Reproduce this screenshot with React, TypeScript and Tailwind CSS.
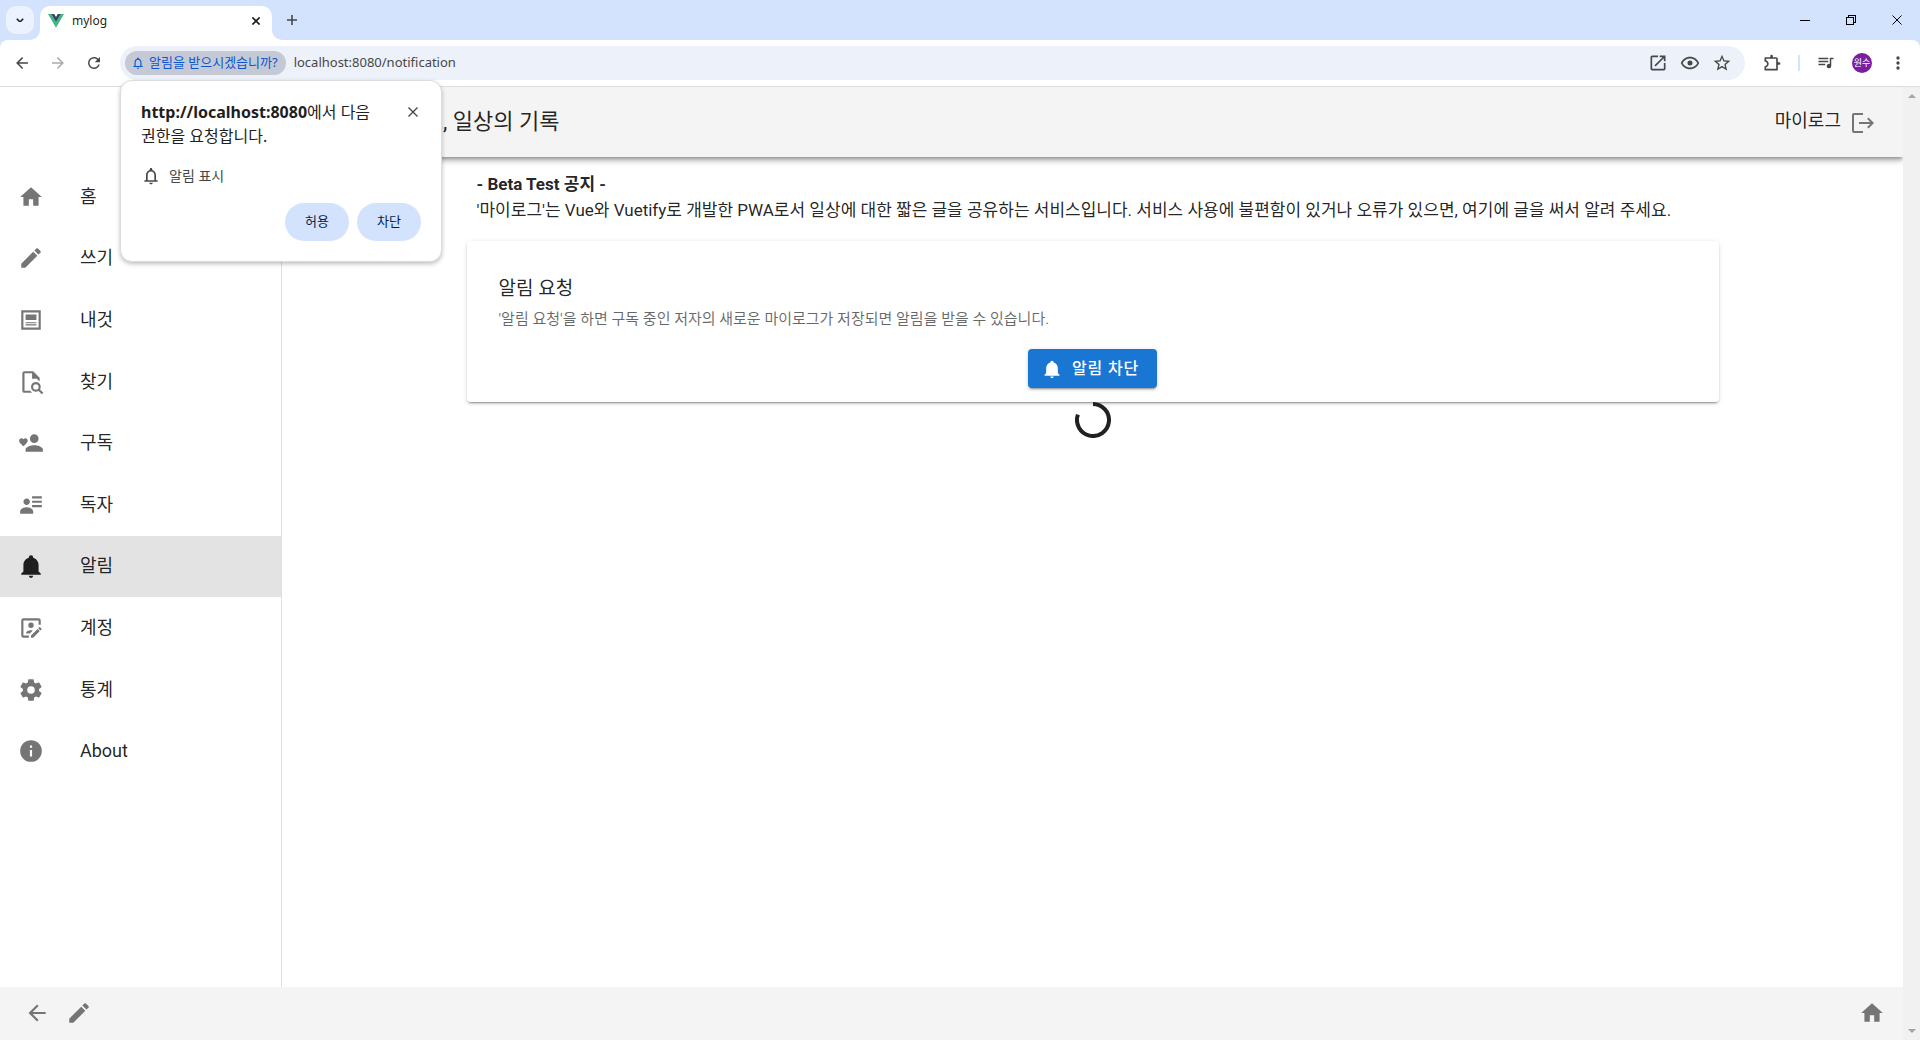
import React from 'react';

// Material icon outlines on a 24x24 grid
const paths = {
  home: 'M10,20V14H14V20H19V12H22L12,3L2,12H5V20H10Z',
  pencil:
    'M20.71,7.04C21.1,6.65 21.1,6 20.71,5.63L18.37,3.29C18,2.9 17.35,2.9 16.96,3.29L15.12,5.12L18.87,8.87M3,17.25V21H6.75L17.81,9.93L14.06,6.18L3,17.25Z',
  post: 'M19,5V19H5V5H19M21,3H3V21H21V3M17,17H7V16H17V17M17,15H7V14H17V15M17,12H7V7H17V12Z',
  search:
    'M14,2H6A2,2 0 0,0 4,4V20A2,2 0 0,0 6,22H13C12.4,21.5 11.9,20.8 11.5,20H6V4H13V9H18V10.2C18.7,10.4 19.4,10.7 20,11.1V8L14,2M20.31,18.9C21.64,16.79 21,14 18.91,12.68C16.8,11.35 14,12 12.69,14.08C11.35,16.19 12,18.97 14.09,20.3C15.55,21.23 17.41,21.23 18.88,20.32L22,23.39L23.39,22L20.31,18.9M16.5,19A2.5,2.5 0 0,1 14,16.5A2.5,2.5 0 0,1 16.5,14A2.5,2.5 0 0,1 19,16.5A2.5,2.5 0 0,1 16.5,19Z',
  subscribe:
    'M15,14C12.3,14 7,15.3 7,18V20H23V18C23,15.3 17.7,14 15,14M15,12A4,4 0 0,0 19,8A4,4 0 0,0 15,4A4,4 0 0,0 11,8A4,4 0 0,0 15,12M5,15L4.4,14.5C2.4,12.6 1,11.4 1,9.9C1,8.7 2,7.7 3.2,7.7C3.9,7.7 4.6,8 5,8.5C5.4,8 6.1,7.7 6.8,7.7C8,7.7 9,8.6 9,9.9C9,11.4 7.6,12.6 5.6,14.5L5,15Z',
  readers:
    'M11,9C11,10.66 9.66,12 8,12C6.34,12 5,10.66 5,9C5,7.34 6.34,6 8,6C9.66,6 11,7.34 11,9M14,20H2V18C2,15.79 4.69,14 8,14C11.31,14 14,15.79 14,18V20M22,12V14H13V12H22M22,8V10H13V8H22M22,4V6H13V4H22Z',
  bell: 'M21,19V20H3V19L5,17V11C5,7.9 7.03,5.17 10,4.29C10,4.19 10,4.1 10,4A2,2 0 0,1 12,2A2,2 0 0,1 14,4C14,4.1 14,4.19 14,4.29C16.97,5.17 19,7.9 19,11V17L21,19M14,21A2,2 0 0,1 12,23A2,2 0 0,1 10,21',
  account:
    'M21.7,13.35L20.7,14.35L18.65,12.3L19.65,11.3C19.86,11.08 20.21,11.08 20.42,11.3L21.7,12.58C21.92,12.79 21.92,13.14 21.7,13.35M12,18.94V21H14.06L20.12,14.88L18.07,12.83L12,18.94M12,14C9.58,14 7.5,15.3 7.5,16.5V17H11L13.6,14.3C13.1,14.1 12.6,14 12,14M12,7A2.5,2.5 0 0,0 9.5,9.5A2.5,2.5 0 0,0 12,12A2.5,2.5 0 0,0 14.5,9.5A2.5,2.5 0 0,0 12,7M5,19V5H19V9H21V5A2,2 0 0,0 19,3H5A2,2 0 0,0 3,5V19A2,2 0 0,0 5,21H10V19H5Z',
  cog: 'M12,15.5A3.5,3.5 0 0,1 8.5,12A3.5,3.5 0 0,1 12,8.5A3.5,3.5 0 0,1 15.5,12A3.5,3.5 0 0,1 12,15.5M19.43,12.97C19.47,12.65 19.5,12.33 19.5,12C19.5,11.67 19.47,11.34 19.43,11L21.54,9.37C21.73,9.22 21.78,8.95 21.66,8.73L19.66,5.27C19.54,5.05 19.27,4.96 19.05,5.05L16.56,6.05C16.04,5.66 15.5,5.32 14.87,5.07L14.5,2.42C14.46,2.18 14.25,2 14,2H10C9.75,2 9.54,2.18 9.5,2.42L9.13,5.07C8.5,5.32 7.96,5.66 7.44,6.05L4.95,5.05C4.73,4.96 4.46,5.05 4.34,5.27L2.34,8.73C2.21,8.95 2.27,9.22 2.46,9.37L4.57,11C4.53,11.34 4.5,11.67 4.5,12C4.5,12.33 4.53,12.65 4.57,12.97L2.46,14.63C2.27,14.78 2.21,15.05 2.34,15.27L4.34,18.73C4.46,18.95 4.73,19.03 4.95,18.95L7.44,17.94C7.96,18.34 8.5,18.68 9.13,18.93L9.5,21.58C9.54,21.82 9.75,22 10,22H14C14.25,22 14.46,21.82 14.5,21.58L14.87,18.93C15.5,18.67 16.04,18.34 16.56,17.94L19.05,18.95C19.27,19.03 19.54,18.95 19.66,18.73L21.66,15.27C21.78,15.05 21.73,14.78 21.54,14.63L19.43,12.97Z',
  info: 'M13,9H11V7H13M13,17H11V11H13M12,2A10,10 0 0,0 2,12A10,10 0 0,0 12,22A10,10 0 0,0 22,12A10,10 0 0,0 12,2Z',
  arrowLeft: 'M20,11V13H8L13.5,18.5L12.08,19.92L4.16,12L12.08,4.08L13.5,5.5L8,11H20Z',
  arrowRight: 'M4,11V13H16L10.5,18.5L11.92,19.92L19.84,12L11.92,4.08L10.5,5.5L16,11H4Z',
  exit: 'M12,2V4H3V20H12V22H3A2,2 0 0,1 1,20V4A2,2 0 0,1 3,2H12M17.5,6.5L23,12L17.5,17.5L16.1,16.1L19.2,13H8V11H19.2L16.1,7.9L17.5,6.5Z',
  bellOutline:
    'M12,22C13.1,22 14,21.1 14,20H10C10,21.1 10.9,22 12,22M18,17V11C18,7.9 16.4,5.4 13.5,4.7V4C13.5,3.2 12.8,2.5 12,2.5C11.2,2.5 10.5,3.2 10.5,4V4.7C7.6,5.4 6,7.9 6,11V17H4V19H20V17H18M16,17H8V11C8,8.5 9.5,6.5 12,6.5C14.5,6.5 16,8.5 16,11V17Z',
  refresh:
    'M17.65,6.35C16.2,4.9 14.21,4 12,4A8,8 0 0,0 4,12A8,8 0 0,0 12,20C15.73,20 18.84,17.45 19.73,14H17.65C16.83,16.33 14.61,18 12,18A6,6 0 0,1 6,12A6,6 0 0,1 12,6C13.66,6 15.14,6.69 16.22,7.78L13,11H20V4L17.65,6.35Z',
  openInNew:
    'M14,3V5H17.59L7.76,14.83L9.17,16.24L19,6.41V10H21V3M19,19H5V5H12V3H5C3.89,3 3,3.9 3,5V19A2,2 0 0,0 5,21H19A2,2 0 0,0 21,19V12H19V19Z',
  eye: 'M12,9A3,3 0 0,1 15,12A3,3 0 0,1 12,15A3,3 0 0,1 9,12A3,3 0 0,1 12,9M12,4.5C17,4.5 21.27,7.61 23,12C21.27,16.39 17,19.5 12,19.5C7,19.5 2.73,16.39 1,12C2.73,7.61 7,4.5 12,4.5M3.18,12C4.83,15.36 8.24,17.5 12,17.5C15.76,17.5 19.17,15.36 20.82,12C19.17,8.64 15.76,6.5 12,6.5C8.24,6.5 4.83,8.64 3.18,12Z',
  star: 'M12,15.39L8.24,17.66L9.23,13.38L5.91,10.5L10.29,10.13L12,6.09L13.71,10.13L18.09,10.5L14.77,13.38L15.76,17.66M22,9.24L14.81,8.63L12,2L9.19,8.63L2,9.24L7.45,13.97L5.82,21L12,17.27L18.18,21L16.54,13.97L22,9.24Z',
  music: 'M2,5H15V7H2V5M2,9H15V11H2V9M2,13H11V15H2V13M17,5H22V7H19V16A3,3 0 1,1 17,13.2V5Z',
  puzzle:
    'M20.5,11H19V7A2,2 0 0,0 17,5H13V3.5A1.5,1.5 0 0,0 10,3.5V5H4A1,1 0 0,0 3,6V10.2C4.8,10.2 6,11.5 6,13C6,14.5 4.8,15.8 3,15.8V20A1,1 0 0,0 4,21H18A1,1 0 0,0 19,20V14H20.5A1.5,1.5 0 0,0 20.5,11M17,19H5V17.2C6.8,16.5 8,14.9 8,13C8,11.1 6.8,9.5 5,8.8V7H17V19Z',
  dots: 'M12,16A2,2 0 1,1 12,20A2,2 0 0,1 12,16M12,10A2,2 0 1,1 12,14A2,2 0 0,1 12,10M12,4A2,2 0 1,1 12,8A2,2 0 0,1 12,4Z',
};

type IconName = keyof typeof paths;

const Icon: React.FC<{ name: IconName; className?: string }> = ({ name, className }) => (
  <svg viewBox="0 0 24 24" fill="currentColor" aria-hidden="true" className={`shrink-0 ${className ?? 'size-5'}`}>
    <path d={paths[name]} />
  </svg>
);

const CrossIcon: React.FC<{ className: string; width: number }> = ({ className, width }) => (
  <svg viewBox="0 0 10 10" fill="none" stroke="currentColor" strokeWidth={width} aria-hidden="true" className={className}>
    <path d="M0.5 0.5L9.5 9.5M9.5 0.5L0.5 9.5" />
  </svg>
);

interface MenuItem {
  label: string;
  icon: IconName;
  active?: boolean;
}

const menuItems: MenuItem[] = [
  { label: '홈', icon: 'home' },
  { label: '쓰기', icon: 'pencil' },
  { label: '내것', icon: 'post' },
  { label: '찾기', icon: 'search' },
  { label: '구독', icon: 'subscribe' },
  { label: '독자', icon: 'readers' },
  { label: '알림', icon: 'bell', active: true },
  { label: '계정', icon: 'account' },
  { label: '통계', icon: 'cog' },
  { label: 'About', icon: 'info' },
];

const TabStrip = () => (
  <div className="flex h-10 items-end bg-[#d3e3fd]">
    <button aria-label="탭 검색" className="mb-1.5 ml-1.5 flex size-7 items-center justify-center rounded-[10px] bg-[#ecf2fe]">
      <svg viewBox="0 0 10 6" fill="none" stroke="#1f1f1f" strokeWidth="2" className="w-2">
        <path d="M1 1l4 4 4-4" />
      </svg>
    </button>
    <div className="relative ml-1.5 flex h-[34px] w-58 items-center rounded-t-[10px] bg-white pr-3 pb-1 pl-2">
      <svg viewBox="0 0 10 10" fill="#fff" className="absolute bottom-0 -left-2.5 size-2.5">
        <path d="M10 0v10H0A10 10 0 0 0 10 0z" />
      </svg>
      <svg viewBox="0 0 10 10" fill="#fff" className="absolute -right-2.5 bottom-0 size-2.5">
        <path d="M0 0v10h10A10 10 0 0 1 0 0z" />
      </svg>
      <svg viewBox="0 0 16 14" className="h-3.5 w-4">
        <path d="M0 0h3.2L8 8.3 12.8 0H16L8 13.8z" fill="#41b883" />
        <path d="M3.2 0h3L8 3.1 9.8 0h3L8 8.3z" fill="#35495e" />
      </svg>
      <span className="ml-2 flex-1 text-xs text-[#1f1f1f]">mylog</span>
      <button aria-label="탭 닫기" className="text-[#1f1f1f]">
        <CrossIcon className="size-2" width={2} />
      </button>
    </div>
    <button aria-label="새 탭" className="mb-[15px] ml-[15px] text-[#474747]">
      <svg viewBox="0 0 10 10" fill="none" stroke="currentColor" strokeWidth="1.6" className="size-2.5">
        <path d="M5 0v10M0 5h10" />
      </svg>
    </button>
    <div className="ml-auto flex h-10 items-center text-black">
      <button aria-label="최소화" className="flex w-[46px] justify-center">
        <svg viewBox="0 0 10 10" stroke="currentColor" className="size-2.5" shapeRendering="crispEdges">
          <path d="M0 5.5h10" />
        </svg>
      </button>
      <button aria-label="창 복원" className="flex w-[46px] justify-center">
        <svg viewBox="0 0 10 10" fill="none" stroke="currentColor" className="size-2.5" shapeRendering="crispEdges">
          <path d="M0.5 2.5h7v7h-7zM2.5 2.5v-2h7v7h-2" />
        </svg>
      </button>
      <button aria-label="닫기" className="flex w-[46px] justify-center">
        <CrossIcon className="size-2.5" width={1} />
      </button>
    </div>
  </div>
);

const Toolbar = () => (
  <div className="bg-[#d3e3fd]">
    <div className="flex h-[47px] items-center rounded-t-lg border-b border-[#dedede] bg-white pl-[13px] text-[#474747]">
      <div className="flex gap-[18px]">
        <button aria-label="뒤로">
          <Icon name="arrowLeft" className="size-[18px]" />
        </button>
        <button aria-label="앞으로" className="text-[#ababab]">
          <Icon name="arrowRight" className="size-[18px]" />
        </button>
        <button aria-label="새로고침">
          <Icon name="refresh" className="size-[18px]" />
        </button>
      </div>
      <div className="ml-[17px] flex h-[34px] flex-1 items-center rounded-full bg-[#ecf1fa] pr-[13px] pl-[5px]">
        <button className="flex h-6 items-center gap-1 rounded-full bg-[#c4c9d5] pr-2 pl-1.5 text-[13px] text-[#0b57d0]">
          <Icon name="bellOutline" className="size-3.5" />
          알림을 받으시겠습니까?
        </button>
        <input
          aria-label="주소"
          defaultValue="localhost:8080/notification"
          className="ml-2 flex-1 bg-transparent text-[13px] text-[#474747] outline-none"
        />
        <div className="flex gap-3">
          <button aria-label="앱에서 열기">
            <Icon name="openInNew" className="size-5" />
          </button>
          <button aria-label="보기">
            <Icon name="eye" className="size-5" />
          </button>
          <button aria-label="북마크">
            <Icon name="star" className="size-5" />
          </button>
        </div>
      </div>
      <button aria-label="확장 프로그램" className="ml-[17px]">
        <Icon name="puzzle" className="size-5" />
      </button>
      <span className="ml-4 h-4 w-0.5 bg-[#d3e3fd]" />
      <button aria-label="미디어 제어" className="ml-[17px]">
        <Icon name="music" className="size-[18px]" />
      </button>
      <button className="ml-[17px] size-5 rounded-full bg-[#7b1fa2] text-center text-[9px] leading-5 text-white">원수</button>
      <button aria-label="메뉴" className="mr-3 ml-4">
        <Icon name="dots" className="size-5" />
      </button>
    </div>
  </div>
);

const PermissionPopup = () => (
  <div
    role="dialog"
    aria-label="권한 요청"
    className="absolute top-20 left-[120px] z-20 w-[322px] rounded-xl border border-[#dcdcdc] bg-white px-5 pt-[19px] pb-5 text-[#1f1f1f] shadow-[0_2px_4px_rgba(0,0,0,0.25)]"
  >
    <div className="flex items-start justify-between">
      <p className="text-base leading-6">
        <strong className="font-bold">http://localhost:8080</strong>에서 다음
        <br />
        권한을 요청합니다.
      </p>
      <button aria-label="닫기" className="mt-[7px] mr-[3px] text-[#474747]">
        <CrossIcon className="size-2.5" width={1.4} />
      </button>
    </div>
    <div className="mt-[18px] flex items-center gap-2 text-sm text-[#474747]">
      <Icon name="bellOutline" className="size-5" />
      알림 표시
    </div>
    <div className="mt-[17px] flex justify-end gap-2 text-[13px] text-[#041e49]">
      <button className="h-[38px] w-16 rounded-full bg-[#d3e3fd]">허용</button>
      <button className="h-[38px] w-16 rounded-full bg-[#d3e3fd]">차단</button>
    </div>
  </div>
);

const Drawer = () => (
  <nav className="w-[282px] shrink-0 border-r border-[#e0e0e0] pt-[79px]">
    <ul className="flex h-[616px] flex-col">
      {menuItems.map((item) => (
        <li key={item.label} className={item.active ? 'flex-1 bg-[#e3e3e3]' : 'flex-1'}>
          <a href={`#${item.icon}`} className="flex h-full items-center gap-9 pl-[18px] text-lg text-black/87">
            <Icon name={item.icon} className={item.active ? 'size-[26px] text-[#1e1e1e]' : 'size-[26px] text-[#757575]'} />
            {item.label}
          </a>
        </li>
      ))}
    </ul>
  </nav>
);

const AppBar = () => (
  <header className="z-10 flex h-[70px] shrink-0 items-center justify-between bg-[#f4f4f4] pr-7 pb-0.5 pl-20 text-black/87 shadow-[0_2px_4px_-1px_rgba(0,0,0,0.3),0_4px_5px_rgba(0,0,0,0.18),0_1px_10px_rgba(0,0,0,0.14)]">
    <h1 className="text-[22px]">마이로그, 일상의 기록</h1>
    <a href="#logout" className="flex items-end gap-2.5 text-lg">
      마이로그
      <Icon name="exit" className="size-6 text-[#757575]" />
    </a>
  </header>
);

const Notification = () => (
  <main className="flex flex-1 justify-center px-4 pt-3.5 text-black/87">
    <div className="w-full max-w-[1252px]">
      <div className="px-2.5 text-[17px] leading-[26px]">
        <p className="font-bold">- Beta Test 공지 -</p>
        <p>
          '마이로그'는 Vue와 Vuetify로 개발한 PWA로서 일상에 대한 짧은 글을 공유하는 서비스입니다. 서비스 사용에 불편함이 있거나 오류가 있으면, 여기에 글을 써서 알려 주세요.
        </p>
      </div>
      <section className="mt-[18px] rounded bg-white px-8 pt-8 pb-3.5 shadow-[0_3px_1px_-2px_rgba(0,0,0,0.2),0_2px_2px_rgba(0,0,0,0.14),0_1px_5px_rgba(0,0,0,0.12)]">
        <h2 className="text-[19px] leading-8">알림 요청</h2>
        <p className="text-[15px] leading-7 text-black/60">
          '알림 요청'을 하면 구독 중인 저자의 새로운 마이로그가 저장되면 알림을 받을 수 있습니다.
        </p>
        <button className="mx-auto mt-4 flex h-[39px] items-center gap-2.5 rounded bg-[#1976d2] pr-[18px] pl-3.5 text-base font-medium tracking-wider text-white shadow-[0_3px_1px_-2px_rgba(0,0,0,0.2),0_2px_2px_rgba(0,0,0,0.14),0_1px_5px_rgba(0,0,0,0.12)]">
          <Icon name="bell" className="size-5" />
          알림 차단
        </button>
      </section>
      <svg viewBox="0 0 36 36" fill="none" stroke="#212121" strokeWidth="4" role="progressbar" className="mx-auto size-9">
        <path d="M18 2A16 16 0 1 1 2.9 12.7" />
      </svg>
    </div>
  </main>
);

const Footer = () => (
  <footer className="flex h-[53px] shrink-0 items-center bg-[#f4f4f4] pr-[18px] pb-0.5 pl-6 text-[#757575]">
    <button aria-label="뒤로 가기">
      <Icon name="arrowLeft" className="size-[26px]" />
    </button>
    <button aria-label="글쓰기" className="ml-4">
      <Icon name="pencil" className="size-[26px]" />
    </button>
    <button aria-label="홈으로" className="ml-auto">
      <Icon name="home" className="size-[26px]" />
    </button>
  </footer>
);

const ScrollBar = () => (
  <div className="z-10 flex w-[17px] shrink-0 flex-col items-center justify-between bg-[#f1f1f1] py-[7px] text-[#a3a3a3]">
    <svg viewBox="0 0 8 4" fill="currentColor" className="h-1 w-2">
      <path d="M0 4L4 0l4 4z" />
    </svg>
    <svg viewBox="0 0 8 4" fill="currentColor" className="h-1 w-2">
      <path d="M0 0l4 4 4-4z" />
    </svg>
  </div>
);

const App: React.FC = () => {
  return (
    <div className="relative flex h-screen flex-col overflow-hidden bg-white font-['Noto_Sans','Noto_Sans_CJK_KR',sans-serif]">
      <TabStrip />
      <Toolbar />
      <PermissionPopup />
      <div className="flex min-h-0 flex-1 font-['Roboto','Noto_Sans_CJK_KR',sans-serif]">
        <div className="flex min-w-0 flex-1 flex-col overflow-hidden">
          <div className="flex min-h-0 flex-1">
            <Drawer />
            <div className="flex min-w-0 flex-1 flex-col">
              <AppBar />
              <Notification />
            </div>
          </div>
          <Footer />
        </div>
        <ScrollBar />
      </div>
    </div>
  );
};

export default App;
